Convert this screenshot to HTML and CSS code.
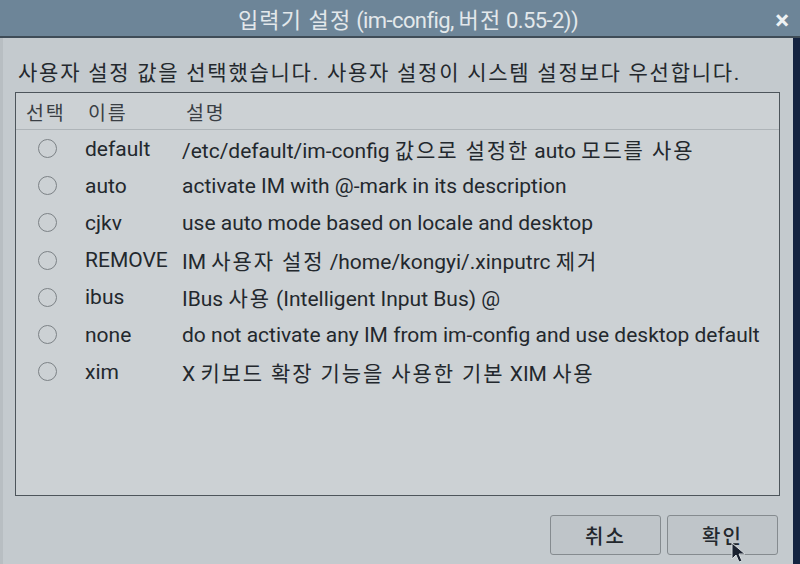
FILE: index.html
```html
<!DOCTYPE html>
<html lang="ko">
<head>
<meta charset="utf-8">
<title>입력기 설정</title>
<link rel="stylesheet" href="styles.css">
</head>
<body>
<div class="dialog">
  <div class="titlebar">
    <span class="title"><span class="ko">입력기 설정</span> (im-config, <span class="ko">버전</span> 0.55-2))</span>
    <span class="close">×</span>
  </div>
  <div class="content">
    <p class="message">사용자 설정 값을 선택했습니다. 사용자 설정이 시스템 설정보다 우선합니다.</p>
    <div class="listbox">
      <div class="row header">
        <span class="c-sel ko">선택</span>
        <span class="c-name ko">이름</span>
        <span class="c-desc ko">설명</span>
      </div>
      <div class="row"><span class="c-sel"><span class="radio"></span></span><span class="c-name">default</span><span class="c-desc">/etc/default/im-config <span class="ko">값으로 설정한</span> auto <span class="ko">모드를 사용</span></span></div>
      <div class="row"><span class="c-sel"><span class="radio"></span></span><span class="c-name">auto</span><span class="c-desc">activate IM with @-mark in its description</span></div>
      <div class="row"><span class="c-sel"><span class="radio"></span></span><span class="c-name">cjkv</span><span class="c-desc">use auto mode based on locale and desktop</span></div>
      <div class="row"><span class="c-sel"><span class="radio"></span></span><span class="c-name">REMOVE</span><span class="c-desc">IM <span class="ko">사용자 설정</span> /home/kongyi/.xinputrc <span class="ko">제거</span></span></div>
      <div class="row"><span class="c-sel"><span class="radio"></span></span><span class="c-name">ibus</span><span class="c-desc">IBus <span class="ko">사용</span> (Intelligent Input Bus) @</span></div>
      <div class="row"><span class="c-sel"><span class="radio"></span></span><span class="c-name">none</span><span class="c-desc">do not activate any IM from im-config and use desktop default</span></div>
      <div class="row"><span class="c-sel"><span class="radio"></span></span><span class="c-name">xim</span><span class="c-desc">X <span class="ko">키보드 확장 기능을 사용한 기본</span> XIM <span class="ko">사용</span></span></div>
    </div>
    <div class="buttons">
      <button class="btn">취소</button>
      <button class="btn">확인</button>
    </div>
  </div>
  <svg class="cursor" width="16" height="22" viewBox="0 0 16 22"><path d="M1 1 L1 17 L5 13 L8 20 L11 19 L8 12 L14 12 Z" fill="#1b2230" stroke="#d8dde0" stroke-width="1"/></svg>
</div>
</body>
</html>
```

FILE: styles.css
```css
html, body {
  margin: 0;
  padding: 0;
  width: 800px;
  height: 564px;
  overflow: hidden;
  background: #142340;
  font-family: "Roboto", "Noto Sans CJK KR", sans-serif;
  color: #23282d;
}
.ko {
  letter-spacing: 0.09em;
}
.dialog {
  position: relative;
  width: 793px;
  height: 564px;
  background: #c4cace;
  display: flex;
  flex-direction: column;
}
.titlebar {
  height: 38px;
  flex: none;
  background: #6d8598;
  border-bottom: 2px solid #3f4c57;
  display: flex;
  align-items: center;
  justify-content: center;
  position: relative;
  width: 800px;
  box-sizing: border-box;
}
.title {
  color: #e3e8eb;
  font-size: 22px;
  letter-spacing: -0.6px;
  margin-left: 16px;
}
.title .ko {
  letter-spacing: 0.05em;
}
.close {
  position: absolute;
  right: 11px;
  top: 5px;
  color: #eef2f4;
  font-size: 26px;
  font-weight: bold;
  line-height: 30px;
}
.content {
  flex: 1;
  display: flex;
  flex-direction: column;
  padding: 0 13px 0 15px;
  border-left: 3px solid #b8bec2;
}
.message {
  margin: 22px 0 0 0;
  font-size: 21px;
  line-height: 27px;
  height: 32px;
  letter-spacing: 0.083em;
  white-space: nowrap;
}
.listbox {
  margin-left: -3px;
  height: 404px;
  border: 1.5px solid #4d555b;
  background: #ccd1d4;
  box-sizing: border-box;
}
.row {
  display: flex;
  align-items: center;
  height: 37.2px;
  font-size: 21px;
  white-space: nowrap;
}
.row.header {
  height: 36px;
  border-bottom: 1px solid #aeb4b8;
  color: #3a3f44;
  font-size: 19.5px;
}
.c-sel {
  width: 69px;
  padding-left: 10px;
  box-sizing: border-box;
  display: flex;
}
.row:not(.header) .c-sel {
  padding-left: 22px;
}
.c-name {
  width: 97px;
}
.header .c-name { width: 96px; padding-left: 3px; }
.header .c-desc { padding-left: 2px; }
.radio {
  display: block;
  width: 19px;
  height: 19px;
  border: 1.5px solid #7c8286;
  border-radius: 50%;
  box-sizing: border-box;
}
.buttons {
  display: flex;
  justify-content: flex-end;
  gap: 6px;
  margin-top: 19px;
  padding-right: 2px;
}
.btn {
  width: 111px;
  height: 40px;
  background: #bfc5c9;
  border: 1px solid #858b8f;
  border-radius: 3px;
  font-family: "Noto Sans CJK KR", sans-serif;
  font-size: 20px;
  font-weight: 500;
  letter-spacing: 0.1em;
  color: #23282d;
}
.cursor {
  position: absolute;
  left: 731px;
  top: 542px;
}
```
